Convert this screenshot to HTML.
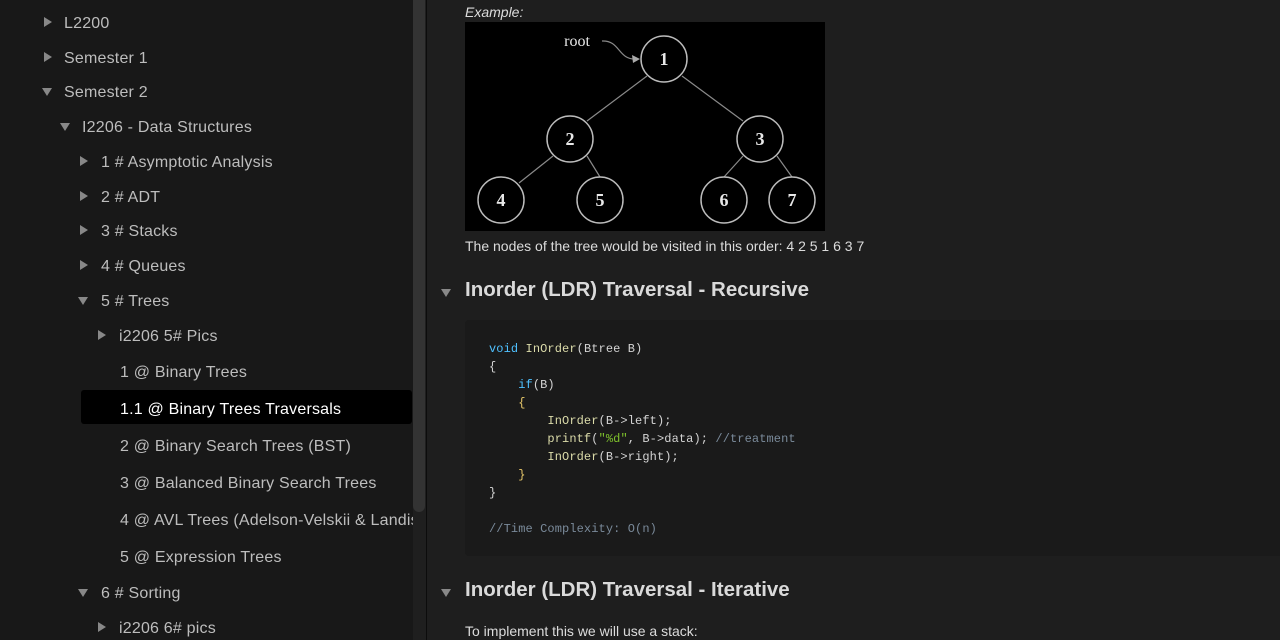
<!DOCTYPE html>
<html><head><meta charset="utf-8"><style>
body{margin:0;width:1280px;height:640px;overflow:hidden;background:#1e1e1e;font-family:"Liberation Sans",sans-serif;position:relative}
#side{position:absolute;left:0;top:0;width:413px;height:640px;background:#181818;overflow:hidden}
#track{position:absolute;left:413px;top:0;width:13px;height:640px;background:#1f1f1f}
#thumb{position:absolute;left:413px;top:0;width:12px;height:512px;background:#333;border-radius:0 0 6px 6px}
#border{position:absolute;left:426px;top:0;width:1px;height:640px;background:#0c0c0c}
.it{position:absolute;font-size:16px;color:#bdbdbd;white-space:nowrap;line-height:20px;letter-spacing:0.2px}
.ar{position:absolute;width:0;height:0}
.r{border-top:5px solid transparent;border-bottom:5px solid transparent;border-left:8px solid #888}
.d{border-left:5px solid transparent;border-right:5px solid transparent;border-top:8px solid #888}
#sel{position:absolute;left:81px;top:390px;width:331px;height:34px;background:#000;border-radius:3px}
.main{position:absolute;color:#dcdcdc}
h2{margin:0;position:absolute;font-size:20.5px;font-weight:bold;color:#dadada;white-space:nowrap}
pre{margin:0;font-family:"Liberation Mono",monospace;font-size:12px;line-height:18px;color:#d4d4d4;letter-spacing:0.1px}
.k{color:#4fc1ff}.f{color:#dcdcaa}.s{color:#7ec02c}.c{color:#7a8a9a}.y{color:#e8c86a}
</style></head><body>
<div id="side">
<div id="sel"></div>
<div class="ar r" style="left:44px;top:17px"></div><div class="it" style="left:64px;top:14px">L2200</div>
<div class="ar r" style="left:44px;top:52px"></div><div class="it" style="left:64px;top:49px">Semester 1</div>
<div class="ar d" style="left:42px;top:88px"></div><div class="it" style="left:64px;top:83px">Semester 2</div>
<div class="ar d" style="left:60px;top:123px"></div><div class="it" style="left:82px;top:118px">I2206 - Data Structures</div>
<div class="ar r" style="left:80px;top:156px"></div><div class="it" style="left:101px;top:153px">1 # Asymptotic Analysis</div>
<div class="ar r" style="left:80px;top:191px"></div><div class="it" style="left:101px;top:188px">2 # ADT</div>
<div class="ar r" style="left:80px;top:225px"></div><div class="it" style="left:101px;top:222px">3 # Stacks</div>
<div class="ar r" style="left:80px;top:260px"></div><div class="it" style="left:101px;top:257px">4 # Queues</div>
<div class="ar d" style="left:78px;top:297px"></div><div class="it" style="left:101px;top:292px">5 # Trees</div>
<div class="ar r" style="left:98px;top:330px"></div><div class="it" style="left:119px;top:327px">i2206 5# Pics</div>
<div class="it" style="left:120px;top:363px">1 @ Binary Trees</div>
<div class="it" style="left:120px;top:400px;color:#fff">1.1 @ Binary Trees Traversals</div>
<div class="it" style="left:120px;top:437px">2 @ Binary Search Trees (BST)</div>
<div class="it" style="left:120px;top:474px">3 @ Balanced Binary Search Trees</div>
<div class="it" style="left:120px;top:511px">4 @ AVL Trees (Adelson-Velskii &amp; Landis)</div>
<div class="it" style="left:120px;top:548px">5 @ Expression Trees</div>
<div class="ar d" style="left:78px;top:589px"></div><div class="it" style="left:101px;top:584px">6 # Sorting</div>
<div class="ar r" style="left:98px;top:622px"></div><div class="it" style="left:119px;top:619px">i2206 6# pics</div>
</div>
<div id="track"></div><div id="thumb"></div><div id="border"></div>

<div class="main" style="left:465px;top:4px;font-size:14px;font-style:italic">Example:</div>
<svg style="position:absolute;left:465px;top:22px" width="360" height="209" viewBox="465 22 360 209">
<rect x="465" y="22" width="360" height="209" fill="#000"/>
<g stroke="#8a8a8a" stroke-width="1.2" fill="none">
<line x1="647" y1="76" x2="587" y2="121"/><line x1="682" y1="76" x2="743" y2="121"/>
<line x1="553" y1="156" x2="519" y2="183"/><line x1="587" y1="156" x2="600" y2="177"/>
<line x1="743" y1="156" x2="724" y2="177"/><line x1="777" y1="156" x2="792" y2="177"/>
<path d="M602 41 C620 40 618 60 636 59"/>
</g>
<path d="M640 59 L632 55 L633 63 Z" fill="#aaa"/>
<g stroke="#bbb" stroke-width="1.5" fill="#000">
<circle cx="664" cy="59" r="23"/><circle cx="570" cy="139" r="23"/><circle cx="760" cy="139" r="23"/>
<circle cx="501" cy="200" r="23"/><circle cx="600" cy="200" r="23"/><circle cx="724" cy="200" r="23"/><circle cx="792" cy="200" r="23"/>
</g>
<g fill="#e8e8e8" font-family="Liberation Serif,serif" font-size="18" font-weight="bold" text-anchor="middle">
<text x="664" y="65">1</text><text x="570" y="145">2</text><text x="760" y="145">3</text>
<text x="501" y="206">4</text><text x="600" y="206">5</text><text x="724" y="206">6</text><text x="792" y="206">7</text>
<text x="577" y="46" font-size="16" font-weight="normal">root</text></g>
</svg>
<div class="main" style="left:465px;top:238px;font-size:14px">The nodes of the tree would be visited in this order: 4 2 5 1 6 3 7</div>

<div class="ar d" style="left:441px;top:289px"></div>
<h2 style="left:465px;top:278px">Inorder (LDR) Traversal - Recursive</h2>
<div style="position:absolute;left:465px;top:320px;width:815px;height:236px;background:#1a1a1a;border-radius:4px 0 0 4px"></div>
<pre style="position:absolute;left:489px;top:340px"><span class="k">void</span> <span class="f">InOrder</span>(Btree B)
{
    <span class="k">if</span>(B)
    <span class="y">{</span>
        <span class="f">InOrder</span>(B-&gt;left);
        <span class="f">printf</span>(<span class="s">"%d"</span>, B-&gt;data); <span class="c">//treatment</span>
        <span class="f">InOrder</span>(B-&gt;right);
    <span class="y">}</span>
}

<span class="c">//Time Complexity: O(n)</span></pre>

<div class="ar d" style="left:441px;top:589px"></div>
<h2 style="left:465px;top:578px">Inorder (LDR) Traversal - Iterative</h2>
<div class="main" style="left:465px;top:623px;font-size:14px">To implement this we will use a stack:</div>
</body></html>
